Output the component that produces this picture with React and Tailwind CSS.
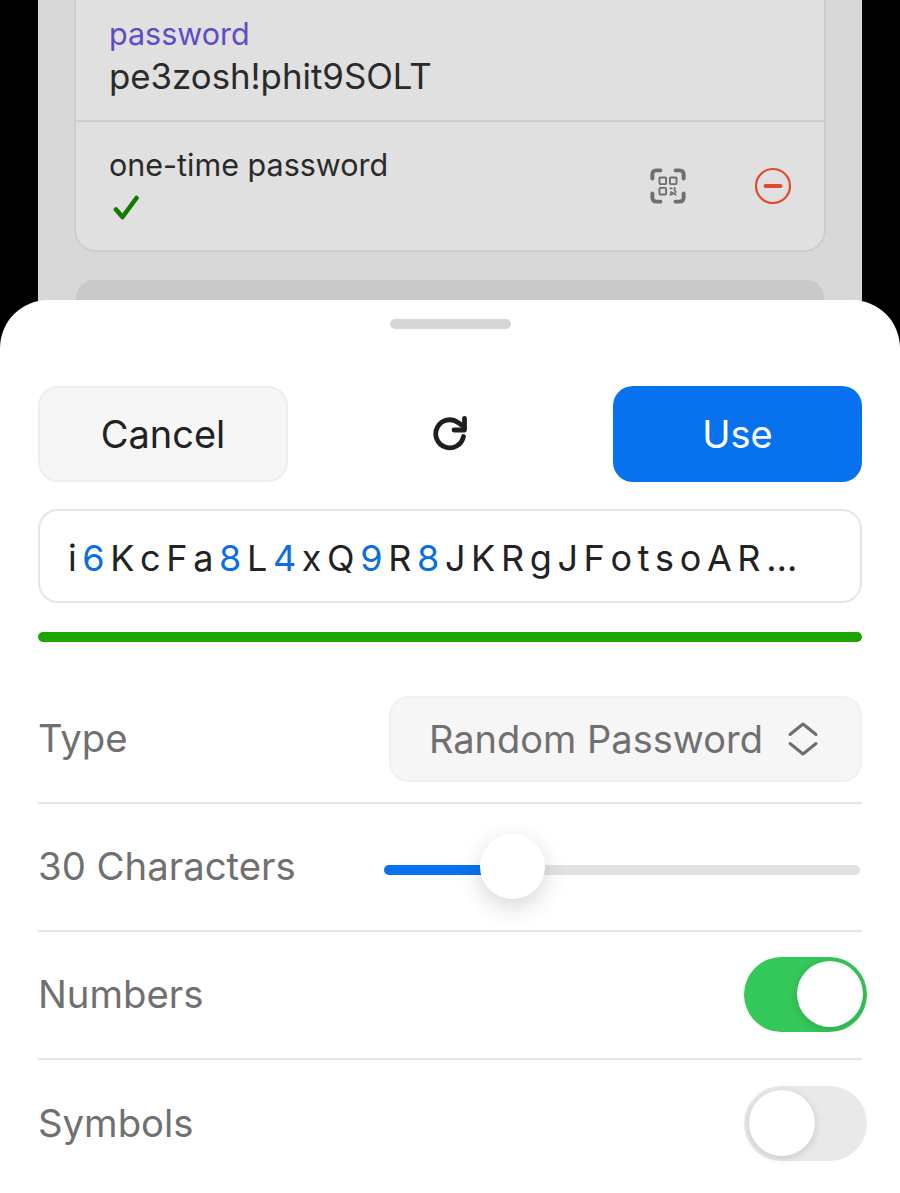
import React from 'react';

const PASSWORD = 'i6KcFa8L4xQ9R8JKRgJFotsoAR…'.split('');

function QrIcon() {
  return (
    <svg width="36" height="36" viewBox="0 0 38 38" fill="none" stroke="#6e6e6e" strokeLinecap="round">
      <g strokeWidth="4.2">
        <path d="M2.500 11V6.500a4 4 0 0 1 4-4H11" />
        <path d="M27 2.500h4.500a4 4 0 0 1 4 4V11" />
        <path d="M35.500 27v4.500a4 4 0 0 1-4 4H27" />
        <path d="M11 35.500H6.500a4 4 0 0 1-4-4V27" />
      </g>
      <g strokeWidth="2">
        <rect x="10" y="10" width="7" height="7" rx="0.8" />
        <rect x="21" y="10" width="7" height="7" rx="0.8" />
        <rect x="10" y="21" width="7" height="7" rx="0.8" />
        <path d="M21.500 21.500h1.500M26 21v2.500M22 25.500l5 2.500M21.500 28h1.500M27 25v.5" />
      </g>
    </svg>
  );
}

function MinusIcon() {
  return (
    <svg width="38" height="38" viewBox="0 0 38 38" fill="none" stroke="#e2492b" strokeLinecap="round">
      <circle cx="19" cy="19" r="17" strokeWidth="2.200" />
      <path d="M11.500 19h15" strokeWidth="3.800" />
    </svg>
  );
}

function CheckIcon() {
  return (
    <svg width="30" height="26" viewBox="0 0 30 26" fill="none" stroke="#137a00" strokeWidth="4.600" strokeLinecap="round" strokeLinejoin="round">
      <path d="M5 14.500 11.500 22 25.500 3" />
    </svg>
  );
}

function RefreshIcon() {
  return (
    <svg width="38" height="38" viewBox="0 0 38 38" fill="none" stroke="#1f1f1f" strokeLinecap="round" strokeLinejoin="round" strokeWidth="4.800">
      <path d="M31.500 21.500A14 14 0 1 1 26 7.500l5.500 3.800" />
      <path d="M32.500 3.500v11.500H22" />
    </svg>
  );
}

function UpDownIcon() {
  return (
    <svg width="32" height="36" viewBox="0 0 32 36" fill="none" stroke="#6e6e6e" strokeWidth="3" strokeLinecap="round" strokeLinejoin="round">
      <path d="M3 13.500 16 3l13 10.500" />
      <path d="M3 22.500 16 33l13-10.500" />
    </svg>
  );
}

function Toggle({ on }) {
  return (
    <div className={on
      ? 'flex h-[75px] w-[123px] items-center justify-end rounded-full bg-[#34c75a] pr-[4px]'
      : 'flex h-[75px] w-[123px] items-center justify-start rounded-full bg-[#e9e9ea] pl-[5px]'}
    >
      <div className="h-[66px] w-[66px] rounded-full bg-white shadow-[0_2px_8px_rgba(0,0,0,0.15)]" />
    </div>
  );
}

function Row({ label, children, last }) {
  return (
    <div className={last
      ? 'flex h-[128px] items-center justify-between'
      : 'flex h-[128px] items-center justify-between border-b-2 border-[#e6e6e6]'}
    >
      <span className="text-[38.300px] text-[#707070]">{label}</span>
      {children}
    </div>
  );
}

export default function App() {
  return (
    <div className="relative h-[1193px] w-[900px] overflow-hidden bg-black font-['Inter',sans-serif]">
      <div className="mx-[38px] h-[400px] bg-[#d8d8d8] px-[37px]">
        <div className="-mx-[1px] -mt-[2px] rounded-b-[22px] border-2 border-t-0 border-[#cdcdcd] bg-[#e0e0e0]">
          <div className="h-[124px] border-b-2 border-[#cdcdcd] pl-[33px] pr-[32px] pt-[16px]">
            <div className="text-[30.500px] leading-[39px] text-[#5f4cc4]">password</div>
            <div className="text-[34.800px] leading-[46px] text-[#2a2a2a]">pe3zosh!phit9SOLT</div>
          </div>
          <div className="flex h-[128px] items-center justify-between pl-[33px] pr-[32px]">
            <div className="mb-[6px] flex flex-col">
              <span className="text-[30.500px] leading-[40px] text-[#2a2a2a]">one-time password</span>
              <span className="ml-[2px] mt-[10px] h-[26px]"><CheckIcon /></span>
            </div>
            <div className="flex items-center gap-[68px]">
              <QrIcon />
              <MinusIcon />
            </div>
          </div>
        </div>
        <div className="mx-[1px] mt-[28px] h-[60px] rounded-[18px] bg-[#c9c9c9]" />
      </div>

      {/* bottom sheet sits over the page */}
      <div className="absolute inset-x-0 top-[300px] h-[893px] rounded-t-[48px] bg-white px-[38px]">
        <div className="mx-auto mt-[19px] h-[10px] w-[121px] rounded-full bg-[#d6d6d6]" />

        <div className="mt-[57px] flex items-center justify-between">
          <div className="flex h-[96px] w-[250px] items-center justify-center rounded-[20px] border-2 border-[#eeeeee] bg-[#f6f6f6] text-[38px] text-[#222222]">Cancel</div>
          <div className="ml-[1px]"><RefreshIcon /></div>
          <div className="flex h-[96px] w-[249px] items-center justify-center rounded-[20px] bg-[#0872ee] text-[38px] text-white">Use</div>
        </div>

        <div className="mt-[27px] flex h-[94px] items-center rounded-[20px] border-2 border-[#e6e6e6] px-[28px] pt-[4px] text-[36px] tracking-[5.620px] text-[#222222]">
          {PASSWORD.map((ch, i) => (
            <span key={i} className={/[0-9]/.test(ch) ? 'text-[#0a6fe0]' : ''}>{ch}</span>
          ))}
        </div>

        <div className="mt-[29px] h-[10px] rounded-full bg-[#1ca400]" />

        <div className="mt-[34px] flex flex-col">
          <Row label="Type">
            <div className="flex h-[86px] w-[473px] items-center gap-[24px] rounded-[20px] border-2 border-[#f0f0f0] bg-[#f6f6f6] pl-[38px] text-[38px] text-[#707070]">
              <span>Random Password</span>
              <UpDownIcon />
            </div>
          </Row>
          <Row label="30 Characters">
            <div className="relative mr-[2px] flex h-[65px] w-[476px] items-center">
              <div className="mt-[6px] h-[10px] w-full rounded-full bg-[#e2e2e5]">
                <div className="h-full w-[110px] rounded-l-full bg-[#0872ee]" />
              </div>
              <div className="absolute left-[96px] -top-[1px] h-[65px] w-[65px] rounded-full bg-white shadow-[0_8px_24px_rgba(0,0,0,0.16)]" />
            </div>
          </Row>
          <Row label="Numbers">
            <div className="-mr-[5px] -mt-[2px]"><Toggle on /></div>
          </Row>
          <Row label="Symbols" last>
            <div className="-mr-[5px] -mt-[2px]"><Toggle /></div>
          </Row>
        </div>
      </div>
    </div>
  );
}
